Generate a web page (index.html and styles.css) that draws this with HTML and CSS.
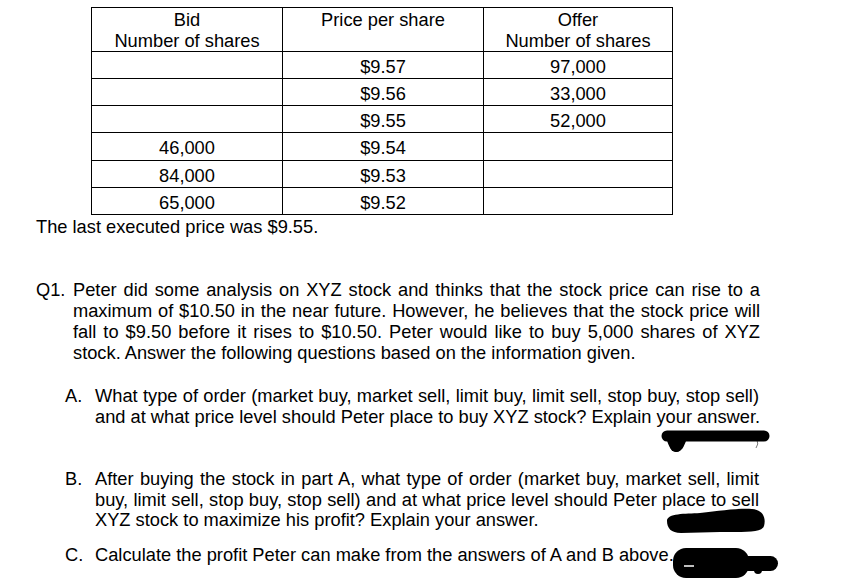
FILE: index.html
```html
<!DOCTYPE html>
<html lang="en">
<head>
<meta charset="utf-8">
<title>Order book question</title>
<link rel="stylesheet" href="styles.css">
</head>
<body>
<div class="page">
  <table class="book">
    <colgroup><col class="c1"><col class="c2"><col class="c3"></colgroup>
    <thead>
      <tr><th>Bid<br>Number of shares</th><th>Price per share</th><th>Offer<br>Number of shares</th></tr>
    </thead>
    <tbody>
      <tr><td></td><td>$9.57</td><td>97,000</td></tr>
      <tr><td></td><td>$9.56</td><td>33,000</td></tr>
      <tr><td></td><td>$9.55</td><td>52,000</td></tr>
      <tr><td>46,000</td><td>$9.54</td><td></td></tr>
      <tr><td>84,000</td><td>$9.53</td><td></td></tr>
      <tr><td>65,000</td><td>$9.52</td><td></td></tr>
    </tbody>
  </table>
  <p class="last">The last executed price was $9.55.</p>

  <div class="q">
    <span class="qlabel">Q1.</span>
    <div class="qtext">
      <span class="ln">Peter did some analysis on XYZ stock and thinks that the stock price can rise to a</span>
      <span class="ln">maximum of $10.50 in the near future. However, he believes that the stock price will</span>
      <span class="ln">fall to $9.50 before it rises to $10.50. Peter would like to buy 5,000 shares of XYZ</span>
      <span class="ln end">stock. Answer the following questions based on the information given.</span>
    </div>
  </div>

  <div class="item item-a">
    <span class="ilabel">A.</span>
    <div class="itext">
      <span class="ln">What type of order (market buy, market sell, limit buy, limit sell, stop buy, stop sell)</span>
      <span class="ln end">and at what price level should Peter place to buy XYZ stock? Explain your answer.</span>
    </div>
  </div>

  <div class="item item-b">
    <span class="ilabel">B.</span>
    <div class="itext">
      <span class="ln">After buying the stock in part A, what type of order (market buy, market sell, limit</span>
      <span class="ln">buy, limit sell, stop buy, stop sell) and at what price level should Peter place to sell</span>
      <span class="ln end">XYZ stock to maximize his profit? Explain your answer.</span>
    </div>
  </div>

  <div class="item item-c">
    <span class="ilabel">C.</span>
    <div class="itext">
      <span class="ln end">Calculate the profit Peter can make from the answers of A and B above.</span>
    </div>
  </div>

  <svg class="redact" width="861" height="587" viewBox="0 0 861 587" aria-hidden="true">
    <path d="M757 440 q2 4 -1 8" fill="none" stroke="#777" stroke-width="1"/>
    <line x1="667" y1="436" x2="764" y2="436" stroke="#000" stroke-width="11" stroke-linecap="round"/>
    <path d="M666 437 C668 444 670 451 676 452 C682 452 684 446 686 441 Z" fill="#000"/>
    <circle cx="676" cy="446" r="6" fill="#000"/>
    <path d="M667 521 C667 513 685 514 700 513 C720 511 738 508 752 509 C764 510 766 519 764 526 C762 533 745 532 720 532 L681 533 C671 533 667 528 667 521 Z" fill="#000"/>
    <rect x="673" y="548" width="76" height="30" rx="13" fill="#000"/>
    <rect x="735" y="556" width="43" height="15" rx="7.5" fill="#000"/>
    <circle cx="758" cy="570" r="4" fill="#000"/>
    <line x1="684" y1="566" x2="694" y2="566" stroke="#fff" stroke-width="1.5"/>
  </svg>
</div>
</body>
</html>
```

FILE: styles.css
```css
html, body {
  margin: 0;
  padding: 0;
  background: #fff;
}

body {
  font-family: "Liberation Sans", Arial, sans-serif;
  font-size: 18.27px;
  color: #000;
}

.page {
  position: relative;
  width: 861px;
  height: 587px;
  padding-top: 7px;
  box-sizing: border-box;
  overflow: hidden;
}

.book {
  margin-left: 91px;
  border-collapse: collapse;
  table-layout: fixed;
  width: 581px;
}

.c1 { width: 191px; }
.c2 { width: 201px; }
.c3 { width: 189px; }

.book th,
.book td {
  border: 1px solid #000;
  text-align: center;
  line-height: 21px;
  padding: 0;
  font-weight: normal;
}

.book th {
  height: 42px;
  vertical-align: top;
  padding-top: 0.5px;
}

.book td {
  height: 21px;
  padding: 4px 0 1.25px;
}

.last {
  margin: 1px 0 0 36px;
  line-height: 21px;
}

.q {
  display: grid;
  grid-template-columns: 37px 687px;
  margin: 42px 0 0 36px;
  line-height: 21px;
}

.ln {
  display: block;
  text-align: justify;
  text-align-last: justify;
  white-space: nowrap;
}

.ln.end {
  text-align-last: left;
}

.item {
  display: grid;
  grid-template-columns: 30px 664px;
  margin-left: 65px;
  line-height: 20.5px;
}

.item-a { margin-top: 23px; }
.item-b { margin-top: 42px; }
.item-c { margin-top: 14px; }

.redact {
  position: absolute;
  left: 0;
  top: 0;
  pointer-events: none;
}
```
